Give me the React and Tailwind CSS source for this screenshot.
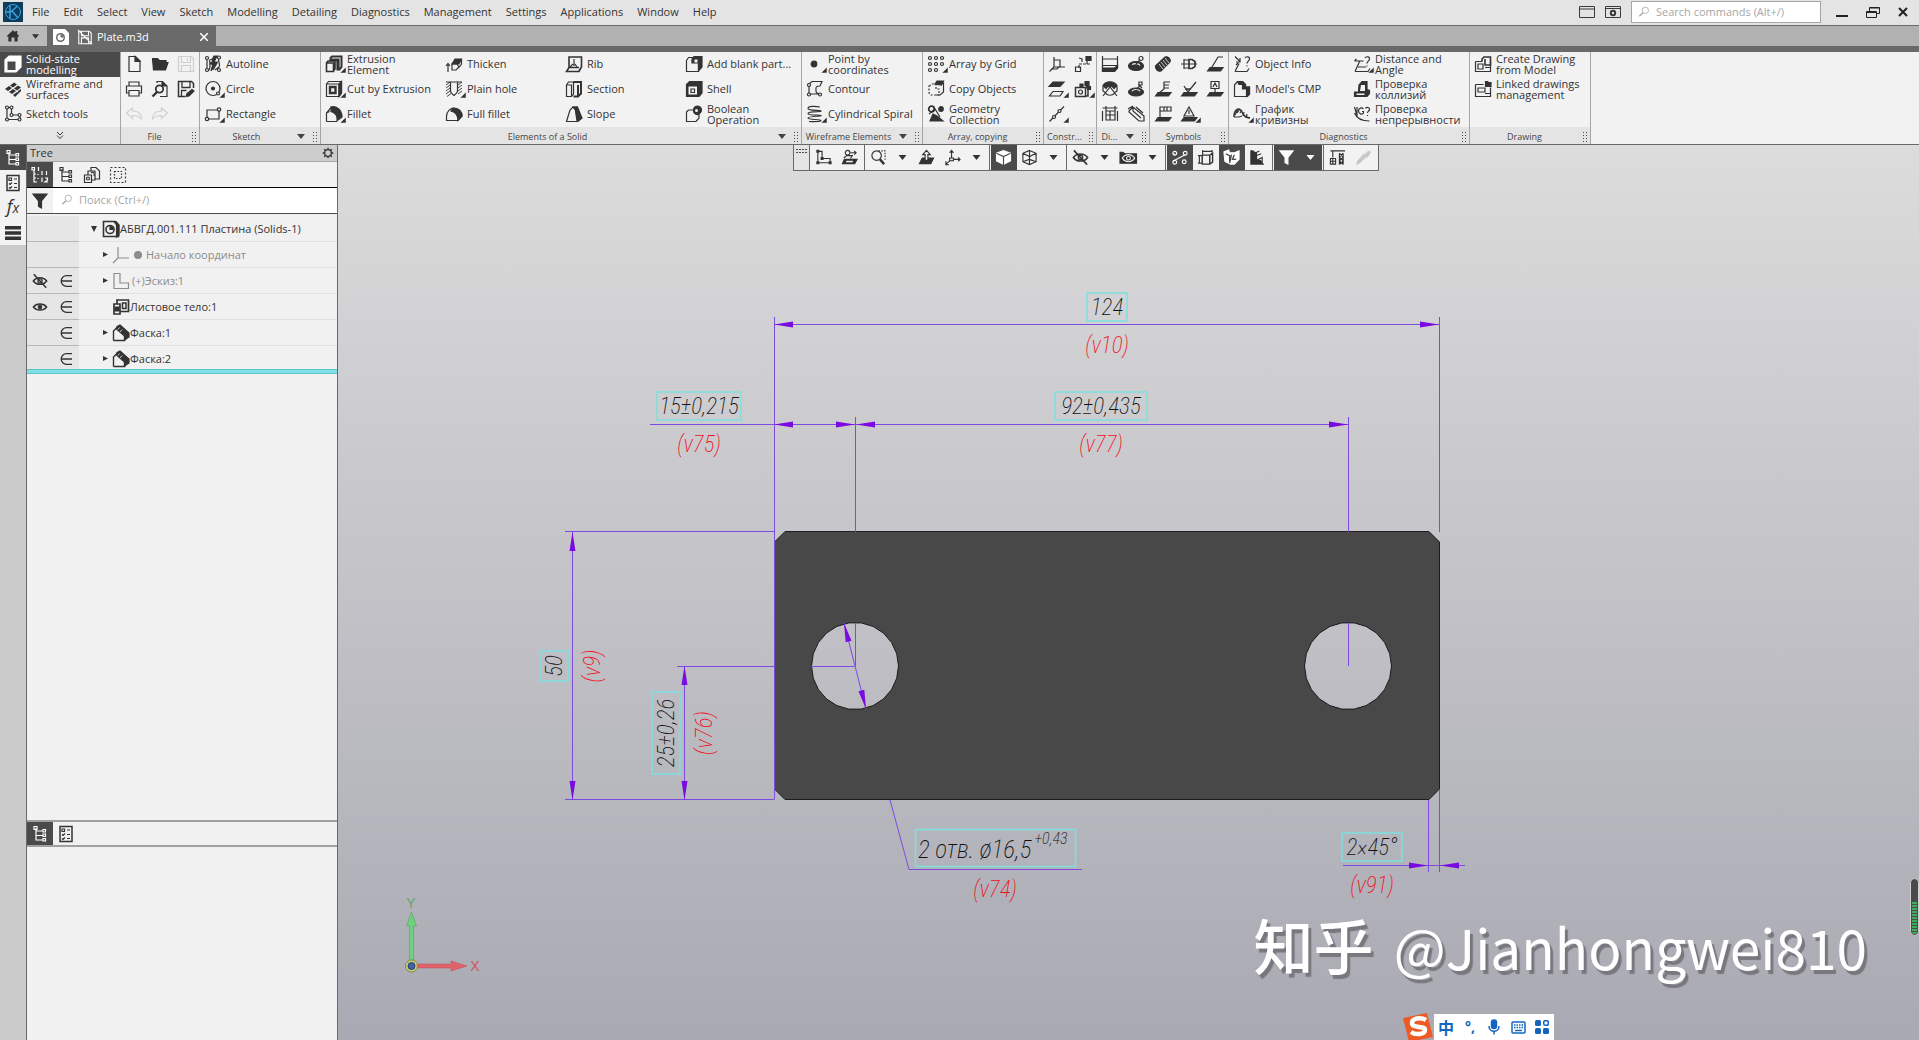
import clsx from 'clsx';

const ICONS = {
    solid: <><path d="M1 5l4-4h12v11l-5 5H1z" fill="currentColor" /><path d="M3.500 6.500h8v8.500h-8z" fill="#4a4a4a" stroke="none" /></>,
    surfaces: <g fill="currentColor" stroke="none"><path d="M1 9l4-3 3 2-4 3zM6 5.500l4-3 3 2-4 3zM5 12l4-3 3 2-4 3zM10 8.500l4-3 3 2-4 3zM9 15l4-3 2 1-4 4zM14 11l3-2v2l-3 3z" /></g>,
    sketchTools: <><path d="M3 2.500h4.500V10H16v4.500H3z" /><g fill="#f2f2f2"><circle cx="3" cy="2.500" r="1.500" /><circle cx="7.500" cy="2.500" r="1.500" /><circle cx="7.500" cy="10" r="1.500" /><circle cx="15.500" cy="10" r="1.500" /><circle cx="15.500" cy="14.500" r="1.500" /><circle cx="3" cy="14.500" r="1.500" /></g></>,
    file: <><path d="M4 1.500h6.500l4.500 4.500v10.500H4z" /><path d="M10 1.500v5h5z" fill="currentColor" /></>,
    open: <path d="M1.500 3.500h5l2 2H15v2h2l-2.500 7.500h-12zM1.500 15" fill="currentColor" />,
    save: <><path d="M1.500 1.500h13l2 2v13h-15z" /><path d="M4.500 1.500v6h9v-6M4.500 16.500v-6h9v6M10.500 3v3" /></>,
    print: <><path d="M4 6V2h10v4M4 13H1.500V6h15v7H14M4 10.500h10V16H4z" /></>,
    preview: <><path d="M6 3V1.500h5.500L16 6v10.500H9" /><path d="M11 1.500V6h5" fill="currentColor" /><circle cx="8.500" cy="9" r="3.700" strokeWidth="1.800" /><path d="M6 12l-4.500 4.500" strokeWidth="2.400" /></>,
    saveAs: <><path d="M16.500 8V3.500l-2-2h-13v15H8" strokeWidth="1.500" /><path d="M5 1.500v6h8v-6M4.500 16.500v-6h5" strokeWidth="1.300" /><path d="M9 16.500l1-3 5-4 2 1.500-5 5z" fill="currentColor" /></>,
    undo: <path d="M1.500 8l6-5v3c6 0 9 3 9 8-2-3-5-3.500-9-3.500v3z" />,
    redo: <path d="M16.500 8l-6-5v3c-6 0-9 3-9 8 2-3 5-3.500 9-3.500v3z" />,
    autoline: <><path d="M3 15V4M3 15c3 1 3-3 3-6s2-6 5-6M11 3L8 9l5-1-4 7M15 3c-2 3 2 5 0 9l-4 3" /><path d="M10 1l3 0-3 6h3l-6 9 2-7H6z" fill="currentColor" /><g fill="#f2f2f2"><circle cx="3" cy="3" r="1.500" /><circle cx="3" cy="15" r="1.500" /><circle cx="15" cy="2.500" r="1.500" /><circle cx="15" cy="15" r="1.500" /><circle cx="7" cy="6" r="1.500" /></g></>,
    circle: <><circle cx="9" cy="8.500" r="7" /><circle cx="9" cy="8.500" r="1.500" fill="currentColor" /><circle cx="14" cy="13.500" r="1.500" fill="#f2f2f2" /></>,
    rectangle: <><path d="M3 5h12v9H3z" /><circle cx="15" cy="4.500" r="1.700" fill="#f2f2f2" /><circle cx="3" cy="14" r="1.700" fill="#f2f2f2" /></>,
    extrusion: <><path d="M5 3.500L7 1.500h9.500V12L14 15" strokeWidth="2" /><path d="M5 4h9v11h-2V6H5z" fill="currentColor" /><path d="M1.500 8h7v8.500h-7zM1.500 8L3 6h7v8l-1.500 2" strokeWidth="1.600" /></>,
    cut: <><path d="M1.500 4l2-2.500h13V13L14 16.500H1.500z" /><path d="M14 4l2.500-2.500V13L14 16.500z" fill="currentColor" /><path d="M1.500 4H14v12.500" /><path d="M5 7h5.500v6H5z" strokeWidth="2.400" /></>,
    fillet: <><path d="M1.500 16.500V8l5-6M12 16.500V13c0-3-3-6-6.500-6.500M1.500 8l3-1.500M12 16.500H1.500" /><path d="M6 2c6-2 11 4 11 10l-4 3c0-5-3-8-7-9z" fill="currentColor" /></>,
    thicken: <><path d="M3 17V9M1 11l2-2.500L5 11" /><path d="M7 9l3-5h6.500L14 9z" fill="currentColor" /><path d="M7 9h5l2 3-3 3H7zM16.500 4v5l-3 4" /></>,
    hole: <><path d="M1 2h16M5.500 2v9c0 2 1.500 3 3.500 4.500 2-1.500 3.500-2.500 3.500-4.500V2" /><path d="M1 5l4-3M1 8l4-3M1 11l4-3M1 14l4-3M2 16.500l4-3M13 5l4-3M13 8l4-3M13 11l4-3M13 14l4-3" strokeWidth="0.900" /></>,
    fullFillet: <><path d="M1.500 15.500v-4C1.500 6 6 3 9 3c5 0 8 4 8 8l-4 4.500z" /><path d="M8 3c5 0 9 4 9 8l-4 4.500c0-5-2-8-7-9.500z" fill="currentColor" /><path d="M4 7.500c4-1 7 1 7 6H3.500z" fill="#f2f2f2" stroke="none" /></>,
    rib: <><path d="M4 12.500V2h12.500v10L14 16.500H1.500L4 12.500h10M16.500 12L14 16" strokeWidth="1.600" /><path d="M9 4v7M5 12l3-3M12 12l-2-3" /></>,
    section: <><path d="M1.500 5l2-3h5v12l-2 2.500h-5zM1.500 5h5v11" /><path d="M8.500 2h7.500v11.500L13 16.500H8.500M13 5v11" strokeWidth="2" /></>,
    slope: <><path d="M1.500 16.500L5 5l3-3h4l-1.500 3L12 16.500z" /><path d="M8 2h4.500L17 13l-4 3.500L10.500 5z" fill="currentColor" /></>,
    blank: <><path d="M1.500 5.500l2-3h4v5h6v9h-12z" /><path d="M7 4L9 1.500h8V12l-3.500 4V8H7z" fill="currentColor" /><path d="M9.500 4.500h3v3h-3z" fill="#f2f2f2" stroke="none" /></>,
    shell: <><path d="M1.500 4.500l3-3h12.500V13L14 16.500H1.500z" fill="currentColor" /><path d="M3.500 6.500h8.500v8H3.500z" fill="#f2f2f2" stroke="none" /><path d="M6 9h3.500v3.500H6z" /></>,
    boolean: <><path d="M1.500 7l2-2h5c0 4 3 5 5.500 4.500V13l-3 3.500h-9.500z" /><circle cx="12.500" cy="5" r="4" fill="currentColor" /><circle cx="11.500" cy="5.500" r="1.500" fill="#f2f2f2" stroke="none" /></>,
    point: <circle cx="8" cy="9" r="2.800" fill="currentColor" />,
    contour: <><path d="M3 4l3-2.500h10L14 6c-5 0-4 2-4 5s3 3 5 3H3V6" /><g fill="#f2f2f2"><circle cx="3" cy="5" r="1.500" /><circle cx="3" cy="14.500" r="1.500" /><circle cx="14" cy="14.500" r="1.500" /></g></>,
    spiral: <path d="M14 2C9 1 2 1 2 3.500S14 5 15 6 2 6 2 8.500 14 9.500 15 10.500 2 11 2 13s13 1 13 2.500-8 1-12 1" />,
    grid: <g>{[3, 9, 15].map((x) => [3, 9, 15].map((y) => (x + y < 30 ? <circle key={x + '-' + y} cx={x} cy={y} r="1.500" /> : null)))}</g>,
    copy: <><path d="M9 4c5 0 5 0 7.500-1v9L13 15H9" /><path d="M2 6l3-2h4v5h3v6H4l-2-2z" strokeDasharray="2 1.500" /><path d="M8 4l2-3h6.500l-2 4z" fill="currentColor" /></>,
    collection: <><circle cx="4.500" cy="4" r="2.800" strokeWidth="1.800" /><circle cx="14" cy="4" r="2.300" fill="currentColor" /><path d="M3 16l3-7 4 2 6 5z" fill="currentColor" /><path d="M2 9l6-5 5 8" /></>,
    lcs: <><path d="M6 2v10h11M6 12l-4.500 4.500M6 5h6v7M3 14h6l3-3" /></>,
    chain: <><path d="M5 13V9h8V3M13 9h4" strokeDasharray="3 1" /><path d="M1.500 12h5v4.500h-5zM5 3l3 1v3" /><path d="M12 1.500h5v4h-5z" fill="currentColor" /></>,
    plane: <><path d="M5 2h11l-4 4.500H1z" fill="currentColor" /><path d="M5 11.500h10l-3 4.500H1.500z" /></>,
    robot: <><path d="M1.500 7.500h10v9h-10zM14 9v7h-3" strokeWidth="1.500" /><circle cx="6.500" cy="12" r="2" /><path d="M6 4h3v3H6zM11 1.500h4v4h-4zM12.500 6.500h4v3h-3z" fill="currentColor" /></>,
    axis: <><path d="M1.500 16.500L16 1.500" /><circle cx="6" cy="12" r="1.500" fill="#f2f2f2" /><circle cx="11.500" cy="6" r="1.500" fill="#f2f2f2" /></>,
    dimLinear: <><path d="M1.500 1v11M16.500 1v11M1.500 4h15" /><path d="M1.500 10.500h15V13l-3 3.500h-12z" /><path d="M1.500 13h12l3-2.500V13l-3 3.500h-12z" fill="currentColor" /></>,
    dimDiameter: <><ellipse cx="9" cy="11" rx="7.500" ry="4.500" fill="currentColor" /><path d="M5 9.500c3-1.500 7-1 8 1" stroke="#f2f2f2" /><path d="M9 9l6-6" /><circle cx="14" cy="3.500" r="2" fill="#f2f2f2" /></>,
    dimAngle: <><path d="M2 5.500c3-5 11-5 14 0l-3 3c-2-3-6-3-8 0z" fill="currentColor" /><path d="M2 16l7-9 7 9M4 13c3 3 7 3 10 0M2 6v5l3 2M16 6v5l-3 2" /></>,
    dimRadius: <><ellipse cx="9" cy="12" rx="7.500" ry="4" fill="currentColor" /><path d="M5 11c2-2 6-2 8 0" stroke="#f2f2f2" /><path d="M9 9l3-2V2h3v3h-3l3 3" /></>,
    dimAuto: <><path d="M5 6h9v9H5zM1.500 3h15M5 1v5M14 1v5M1.500 6v10M16.500 6v10M5 10h9M9 6v9" /></>,
    dimSlant: <path d="M2 6l4-4 11 9v5h-5L2 7zM6 2v4l8 7M1 4l5-3M9 2l7 6" />,
    thread: <><path d="M1.500 11L11 2c3-1 6 2 5 5l-9 9c-3 1-6-2-5.500-5z" fill="currentColor" /><path d="M5 9l4 5M7 7l4 5M9 5l4 5M11 3l4 5" stroke="#f2f2f2" strokeWidth="0.800" /></>,
    centerMark: <><path d="M1 9h16M4 4v10M4 5h6M4 13h6" /><path d="M9 4.500h3l3 2v5l-3 2H9z" strokeWidth="1.700" /></>,
    leader: <><path d="M6 12l6-10h5" /><path d="M1.500 16l2.500-3.500h13l-2.500 3.500z" fill="currentColor" /></>,
    brand: <><path d="M5 13L10 9V2h6M10 5h5M10 8h5" /><path d="M1.500 16l2.500-3.500h13l-2.500 3.500z" fill="currentColor" /></>,
    roughness: <><path d="M4 6l4 6 8-10M5 9h5" strokeWidth="1.300" /><path d="M1.500 16l2.500-3.500h13l-2.500 3.500z" fill="currentColor" /></>,
    base: <><path d="M5 1.500h8v7H5zM9 8.500V12M7 7l2-4 2 4" /><path d="M1.500 16l2.500-3.500h13l-2.500 3.500z" fill="currentColor" /></>,
    tolerance: <><path d="M6 12V2h11v4H6M10 2v4M13 2v4" /><path d="M1.500 16l2.500-3.500h13l-2.500 3.500z" fill="currentColor" /></>,
    warning: <><path d="M9 2l5 9H4zM9 5v4" /><path d="M1.500 16l2.500-3.500h13l-2.500 3.500z" fill="currentColor" /></>,
    info: <><path d="M2 1.500l5 5M7 3v4H3M3 10l2-2M2 16.500l4-8M2 16.500h12l2-3" /><path d="M12 3c1-2 5-1.500 4.500 1S14 6.500 14 8.500M14 10.500v1" /></>,
    mass: <><path d="M1.500 5l3-3.500h5l3 3v2.500h4v7l-2 2.500h-13z" /><path d="M6 4.500l-1.500-3h5l3 3v2.500h4v7l-3 2.500V9H9.500V4.500z" fill="currentColor" /></>,
    graph: <><path d="M1 12c0-7 5-11 8-5s4 5 8 6" strokeWidth="1.600" /><path d="M2 10l3-6M4 8l3-4M7 8l2-3M10 11l1-4M13 13l1-4M1 12h5l3-1" /></>,
    distance: <><path d="M1.500 6h9M1.500 6l2-2M2 16.500l5-11M2 16.500h13l2-3M5 12h8" /><path d="M12 3c1-2 5-1.500 4.500 1S14 6.500 14 8.500M14 10.500v1" /></>,
    collision: <><path d="M1.500 12h4L6 5l3-3.500h5v8l2.500 1v3L14 16.500H1.500z" fill="currentColor" /><path d="M3.500 13.500h8v1.500h-8zM8 5h4v6H7z" fill="#f2f2f2" stroke="none" /></>,
    continuity: <><path d="M1.500 2l2 7M1.500 8c2 5 7 8 15 8M4 2v9" /><path d="M10.500 4C9 2 5.500 3 5.500 6s4 4 5 2V6.500H9M12.500 3.500c1-2 4.500-1 4 1S14.500 6.500 14.500 8M14.500 10v1" /></>,
    createDrawing: <><path d="M1.500 6.500h7M1.500 6.500v10h15v-10M4 9h5v5H4zM11 12.500h5.500" /><path d="M8 6V4l2-2h6.500v8H11V4" strokeWidth="1.600" /></>,
    linked: <><path d="M1.500 4.500h8M1.500 4.500v12h15v-9M4 8h7v4H4zM11 13.500h5.500" /><path d="M11.500 1.500h2l1 1H17v4h-5.500z" fill="currentColor" /></>,
    sketchOn: <path d="M3 2.500h4.500V10H16v4.500H3zM2 1.500h2v2H2zM6.500 9h2v2h-2zM15 13.500h2v2h-2zM2 13.500h2v2H2z" />,
    placeOn: <><circle cx="7" cy="4" r="2.500" /><path d="M10 4h6M14 2l2 2-2 2M3 9.500l3-2.500h6l-2 3" /><path d="M1.500 15.500l2-4.500h13.500l-2.500 4.500z" fill="currentColor" /><path d="M5.500 13.300h7" stroke="#f2f2f2" strokeWidth="1.600" /></>,
    zoomArea: <><circle cx="7" cy="7" r="5" /><path d="M10.500 11l4.500 5" strokeWidth="2.500" /><path d="M9 2h7v10" strokeDasharray="1.500 1.500" /></>,
    orient: <><path d="M1.500 15.500l3-6h12l-3 6z" fill="currentColor" /><path d="M7.500 12V6H5l4-4.500L13 6h-2.500v6z" fill="#f2f2f2" /></>,
    axes: <><path d="M8 12V2M6 4l2-2.500L10 4M8 11h9M15 9l2 2-2 2M8 11l-6 5M2 13v3.500h3" /><path d="M6 9.500h4v3H6z" fill="#f2f2f2" /></>,
    cube: <><path d="M9 1l8 3v9l-8 4-8-4V4z" fill="currentColor" stroke="none" /><path d="M1.500 4.500L9 8l7.500-3.500M9 8v9" stroke="#4a4a4a" /></>,
    wireCube: <><path d="M9 1.500l7 3v9l-7 3-7-3v-9zM2 4.500L9 8l7-3.500M9 8v8.500M9 1.500V11l-7 2.500M9 11l7 2.500" /></>,
    eyeOff: <><path d="M1.500 9C5 4 13 4 16.500 9 13 14 5 14 1.500 9zM2 1.500l14 15" strokeWidth="1.700" /><circle cx="9" cy="9" r="2.300" strokeWidth="1.500" /></>,
    eye: <><path d="M1.500 9C5 4.500 13 4.500 16.500 9 13 13.500 5 13.500 1.500 9z" strokeWidth="1.500" /><circle cx="9" cy="9" r="2" fill="currentColor" /></>,
    eyeBox: <><path d="M0 3.500h3l2 1.500h12.500v10H0z" fill="currentColor" /><path d="M2.500 9.700c3-5 10-5 13 0-3 5-10 5-13 0z" stroke="#f2f2f2" /><circle cx="9" cy="9.700" r="2" stroke="#f2f2f2" /></>,
    constraints: <><path d="M2 13L15 6M3 5l1 1" /><circle cx="4" cy="4.500" r="2" /><circle cx="4" cy="14" r="2" /><circle cx="15" cy="4.500" r="2" /><circle cx="14" cy="13.500" r="2" /></>,
    dims: <><path d="M5.500 6.500h8v9.500h-8zM13.500 6.500l3-2v9.500l-3 2" strokeWidth="1.500" /><path d="M6 1v5M16 1v3M6 2.500h10M1 7h4M1 15h4M2.500 6.500v9" /></>,
    layers: <><path d="M1 3l5-2 1 3h5l5-2v9l-5 5H8l-6-3z" fill="currentColor" /><path d="M3 5l4 2v6M9 6l-2 9M12 6l-2 5h4" stroke="#4a4a4a" strokeWidth="1.400" /></>,
    sheet: <><path d="M2 2v14h13l-3-4H8V5L4 2z" fill="currentColor" /><path d="M5 5l6-3M5 8l8-3M8 12l6-3v5" /></>,
    filter: <path d="M2 2h14l-5.500 7v7l-3-1.500V9z" fill="currentColor" />,
    crane: <><path d="M1.500 2h15.500M11 4.500v12M15 4.500v12M11 4.500l4 4-4 4 4 4M15 4.500l-4 4 4 4-4 4M4 2v7M1.500 10h5.500v6H1.500zM1.500 13H7M4 10v6" /></>,
    dropper: <path d="M2 16l1-3.500 6-6 2 2-6 6zM9 5l4 4M11 6l2.500-3c2-1.500 3.500 0 2 2L13 8z" fill="currentColor" />,
    tree: <><path d="M5 3v12h7M5 6h7M5 10.500h7" /><path d="M3 1.500h3v3H3zM12 4.500h2.500v2.500H12zM12 9h2.500v2.500H12zM12 13.500h2.500V16H12z" /></>,
    props: <><path d="M3 1.500h12v15H3z" strokeWidth="1.500" /><path d="M5 4h2.500v2.500H5zM5 9.500l1 1 2-2M5 13.500l1 1 2-2M10 5h3M10 9.500h3M10 13.500h3" /></>,
    bars: <path d="M0 3h18M0 9h18M0 15h18" strokeWidth="4" />,
    treeNumbers: <><path d="M3 4v12h3M3 8h2M3 12h2M1 1.500h2.500v2.500H1z" /><path d="M7.500 1v4M11 5v4M15.500 5v4M7 8v1M7 12v1M11 11.500V16M14 12h2.500v2L14 16h3" /></>,
    copies: <><path d="M1.500 9h7v7.500h-7zM5 9V5h7v9H8.500M8 5V1.500h5L16.500 5v8H12" /><circle cx="5" cy="12.500" r="1.500" /><path d="M8 7c2-2 4 0 3 3" /></>,
    dotted: <><path d="M1.500 1.500h15v15h-15z" strokeDasharray="2 2" /><path d="M5.500 5.500h7v7h-7z" strokeDasharray="1.500 1.500" /></>,
    part: <><path d="M1.500 5V1.500H13L16.500 5v11.500h-15z" strokeWidth="1.600" /><path d="M12 1.500h2L17 5v10l-2.500 2V5z" fill="currentColor" /><circle cx="8" cy="9.500" r="4" strokeWidth="1.600" /><path d="M8 9.500V6.500a3 3 0 013 3z" fill="currentColor" /></>,
    coord: <path d="M6 1v11h11M6 12l-5 5" />,
    sketch: <path d="M2 1.500h6V11h8.500v5.500H2z" />,
    sheetBody: <><path d="M2 6h6v10H2zM5 6V2h11.500v11.500H8" strokeWidth="1.700" /><path d="M10.500 5h3.500v5.500h-3.500z" strokeWidth="1.500" /><path d="M3 9h4v4H3z" fill="currentColor" /></>,
    chamfer: <><path d="M1.500 16.500V7L5 3.500M12.500 12v4.500h-11M12.500 16.500L16 13" strokeWidth="1.400" /><path d="M5 2.500L8 1l9 8v4l-3.500 1.500-1-2.500L4.500 5z" fill="currentColor" /><path d="M7.500 3.500l-1.500 2M10 5.500L8 8" stroke="#f2f2f2" strokeWidth="0.800" /></>,
    search: <><circle cx="11" cy="6.500" r="4.800" /><path d="M7.500 10L2 15.500" strokeWidth="2" /></>,
    gear: <><circle cx="9" cy="9" r="5" strokeWidth="2" /><path d="M9 1v3M9 14v3M1 9h3M14 9h3M3.300 3.300l2 2M12.700 12.700l2 2M3.300 14.700l2-2M12.700 5.300l2-2" strokeWidth="2" /></>,
    home: <path d="M1 9l8-7.500 3 2.700V2.500h2.500V6.500L17 9v.5h-2V16h-4v-5H7v5H3V9.500H1z" fill="currentColor" stroke="none" />,
    diskOff: <><path d="M2 2.500h12l2 2v12H2zM5 2.500v5h8v-5M5 16v-6h8v6M1 1l16 16" /></>,
};

function Icon({ name, corner, className = 'h-[18px] w-[18px]' }) {
    return (
        <svg viewBox="0 0 18 18" aria-hidden="true" fill="none" stroke="currentColor" strokeWidth="1.200" className={clsx('shrink-0 overflow-visible', className)}>
            {ICONS[name]}
            {corner && <path d="M21 12v6h-6z" fill="currentColor" stroke="#f2f2f2" strokeWidth="0.500" />}
        </svg>
    );
}

function Caret({ className }) {
    return (
        <svg viewBox="0 0 8 5" aria-hidden="true" className={clsx('h-[5px] w-2 shrink-0', className)}>
            <path d="M0 0h8L4 5z" fill="currentColor" />
        </svg>
    );
}

function Grip() {
    return (
        <svg viewBox="0 0 5 10" aria-hidden="true" className="h-2.5 w-[5px] shrink-0">
            {[0, 3, 6, 9].map((y) => (
                <g key={y} fill="#4a4a4a">
                    <rect x="0" y={y} width="1" height="1" />
                    <rect x="3" y={y} width="1" height="1" />
                </g>
            ))}
        </svg>
    );
}

const MENU = ['File', 'Edit', 'Select', 'View', 'Sketch', 'Modelling', 'Detailing', 'Diagnostics', 'Management', 'Settings', 'Applications', 'Window', 'Help'];

// [icon, label, hasCorner], three items per column, "|" marks the line break
const GROUPS = [
    {
        title: 'Sketch', width: 'w-[121px]', caret: true,
        columns: [[['autoline', 'Autoline'], ['circle', 'Circle', true], ['rectangle', 'Rectangle', true]]],
    },
    {
        title: 'Elements of a Solid', width: 'w-[481px]', caret: true,
        columns: [
            [['extrusion', 'Extrusion|Element', true], ['cut', 'Cut by Extrusion', true], ['fillet', 'Fillet', true]],
            [['thicken', 'Thicken'], ['hole', 'Plain hole', true], ['fullFillet', 'Full fillet']],
            [['rib', 'Rib'], ['section', 'Section'], ['slope', 'Slope']],
            [['blank', 'Add blank part...'], ['shell', 'Shell'], ['boolean', 'Boolean|Operation']],
        ],
    },
    {
        title: 'Wireframe Elements', width: 'w-[121px]', caret: true,
        columns: [[['point', 'Point by|coordinates', true], ['contour', 'Contour'], ['spiral', 'Cylindrical Spiral', true]]],
    },
    {
        title: 'Array, copying', width: 'w-[121px]',
        columns: [[['grid', 'Array by Grid', true], ['copy', 'Copy Objects'], ['collection', 'Geometry|Collection']]],
    },
    {
        title: 'Constr...', width: 'w-[53px]',
        icons: [['lcs', 'Local coordinate system'], ['chain', 'Joint'], ['plane', 'Offset plane', true], ['robot', 'Component', true], ['axis', 'Axis', true]],
    },
    {
        title: 'Di...', width: 'w-[53px]', caret: true,
        icons: [['dimLinear', 'Linear dimension'], ['dimDiameter', 'Diametral dimension'], ['dimAngle', 'Angular dimension'], ['dimRadius', 'Radial dimension'], ['dimAuto', 'Auto dimension'], ['dimSlant', 'Slanted dimension']],
    },
    {
        title: 'Symbols', width: 'w-[79px]',
        icons: [['thread', 'Thread'], ['centerMark', 'Center mark'], ['leader', 'Leader'], ['brand', 'Brand'], ['roughness', 'Roughness'], ['base', 'Base'], ['tolerance', 'Tolerance'], ['warning', 'Mark', true]],
    },
    {
        title: 'Diagnostics', width: 'w-[241px]',
        columns: [
            [['info', 'Object Info'], ['mass', "Model's CMP"], ['graph', 'График|кривизны', true]],
            [['distance', 'Distance and|Angle', true], ['collision', 'Проверка|коллизий'], ['continuity', 'Проверка|непрерывности']],
        ],
    },
    {
        title: 'Drawing', width: 'w-[121px]',
        columns: [[['createDrawing', 'Create Drawing|from Model'], ['linked', 'Linked drawings|management']]],
    },
];

const FILE_ICONS = [['file', 'New'], ['open', 'Open'], ['save', 'Save', false, true], ['print', 'Print'], ['preview', 'Preview'], ['saveAs', 'Save as'], ['undo', 'Undo', false, true], ['redo', 'Redo', false, true]];

function RibbonButton({ icon, label, corner, active }) {
    return (
        <button type="button" className={clsx('flex h-[25px] w-[120px] items-center gap-1 pb-0.5 pl-1 text-left leading-[11px] whitespace-nowrap', active ? 'bg-[#4a4a4a] text-white' : 'hover:bg-[#dcdcdc]')}>
            <Icon name={icon} corner={corner} />
            <span className="flex flex-col">
                {label.split('|').map((line) => <span key={line}>{line}</span>)}
            </span>
        </button>
    );
}

function IconGrid({ icons }) {
    return (
        <div className="flex flex-wrap content-start">
            {icons.map(([icon, label, corner, disabled]) => (
                <button key={icon} type="button" aria-label={label} disabled={disabled} className="flex h-[25px] w-[26px] items-center justify-center pb-0.5 hover:bg-[#dcdcdc] disabled:text-[#cfcfcf]">
                    <Icon name={icon} corner={corner} />
                </button>
            ))}
        </div>
    );
}

function Group({ title, width, caret, columns, icons }) {
    return (
        <section className={clsx('flex shrink-0 flex-col border-r border-[#a6a6a6]', width)}>
            <div className="flex h-[75px]">
                {icons ? <IconGrid icons={icons} /> : columns.map((column) => (
                    <div key={column[0][0]} className="w-[120px]">
                        {column.map(([icon, label, corner]) => <RibbonButton key={icon} icon={icon} label={label} corner={corner} />)}
                    </div>
                ))}
            </div>
            <div className="flex h-[17px] items-center gap-1 bg-[#e4e4e4] pt-0.5 pr-0.5 text-[9px] leading-4 text-[#444]">
                <span className="min-w-0 flex-1 text-center whitespace-nowrap">{title}</span>
                {caret && <Caret className="mr-1" />}
                <Grip />
            </div>
        </section>
    );
}

function TitleBar() {
    return (
        <header className="flex h-[26px] shrink-0 items-center border-b border-[#696969] bg-[#e4e4e4] pb-px">
            <svg viewBox="0 0 20 20" className="ml-[3px] h-5 w-5" aria-hidden="true">
                <rect width="20" height="20" fill="#0d3c5c" />
                <circle cx="10" cy="10" r="7.500" fill="none" stroke="#3aa5dc" />
                <path d="M7 3.500v13M7 10.500l7-6M9 9l6 7M3 10h4" fill="none" stroke="#3aa5dc" strokeWidth="1.500" />
            </svg>
            <nav className="ml-0.5 flex flex-1">
                {MENU.map((item) => (
                    <button key={item} type="button" className="px-[7px] hover:bg-[#d0d0d0]">{item}</button>
                ))}
            </nav>
            <button type="button" aria-label="Layout" className="mr-2.5">
                <svg viewBox="0 0 16 12" className="h-3 w-4" fill="none" stroke="#3a3a3a"><path d="M.5.5h15v11H.5zM.5 3h15" /></svg>
            </button>
            <button type="button" aria-label="Interface settings" className="mr-2.5">
                <svg viewBox="0 0 16 12" className="h-3 w-4" fill="none" stroke="#3a3a3a"><path d="M.5.5h15v11H.5zM.5 2.500h15" /><circle cx="8" cy="7" r="2.200" strokeWidth="2" /></svg>
            </button>
            <label className="flex h-[22px] w-[190px] items-center gap-1.5 border border-[#a6a6a6] bg-white pl-1.5 text-[#a6a6a6]">
                <Icon name="search" className="h-3 w-3" />
                <input aria-label="Search commands" placeholder="Search commands (Alt+/)" className="w-full bg-transparent outline-none placeholder:text-[#a6a6a6]" />
            </label>
            <div className="mr-[11px] ml-[15px] flex items-center gap-[18px]">
                <button type="button" aria-label="Minimize"><svg viewBox="0 0 12 12" className="h-3 w-3" stroke="#222" strokeWidth="2"><path d="M0 10h12" /></svg></button>
                <button type="button" aria-label="Restore"><svg viewBox="0 0 14 12" className="h-3 w-3.5" fill="none" stroke="#222"><path d="M.5 5.500h10v6H.5zM.5 6.500h10M3.500 5V1.500h10v6H11M3.500 2h10" /></svg></button>
                <button type="button" aria-label="Close"><svg viewBox="0 0 10 10" className="h-2.5 w-2.5" stroke="#222" strokeWidth="2"><path d="M1 1l8 8M9 1L1 9" /></svg></button>
            </div>
        </header>
    );
}

function TabBar() {
    return (
        <div className="flex h-[26px] shrink-0 border-b-[6px] border-[#696969] bg-[#b1b1b1]">
            <button type="button" aria-label="Home" className="flex w-[47px] items-center gap-3 bg-[#bababa] pl-1.5">
                <Icon name="home" className="h-3.5 w-3.5" />
                <Caret className="h-1 w-[7px]" />
            </button>
            <div className="flex w-[169px] items-center bg-[#696969] pt-0.5 pl-[5px] text-white">
                <svg viewBox="0 0 18 18" className="h-[18px] w-[18px]" aria-hidden="true">
                    <path d="M1 1h12l4 4v12H1z" fill="#fff" />
                    <circle cx="8.500" cy="9.500" r="4.500" fill="#696969" />
                    <circle cx="8.500" cy="9.500" r="3" fill="#fff" />
                    <path d="M8.500 9.500v-3a3 3 0 013 3z" fill="#696969" />
                </svg>
                <Icon name="diskOff" className="ml-[7px] h-4 w-4" />
                <span className="ml-1 flex-1">Plate.m3d</span>
                <button type="button" aria-label="Close tab" className="mr-2">
                    <svg viewBox="0 0 8 8" className="h-2 w-2" stroke="currentColor" strokeWidth="1.500"><path d="M0 0l8 8M8 0L0 8" /></svg>
                </button>
            </div>
        </div>
    );
}

function Ribbon() {
    return (
        <div className="flex h-[93px] shrink-0 border-b border-[#696969] bg-[#f2f2f2]">
            <section className="flex w-[121px] shrink-0 flex-col border-r border-[#a6a6a6]">
                <RibbonButton icon="solid" label="Solid-state|modelling" active />
                <RibbonButton icon="surfaces" label="Wireframe and|surfaces" />
                <RibbonButton icon="sketchTools" label="Sketch tools" />
                <button type="button" aria-label="More toolsets" className="flex h-[17px] items-center justify-center bg-[#e4e4e4]">
                    <svg viewBox="0 0 8 7" className="h-[7px] w-2" fill="none" stroke="currentColor"><path d="M1 0l3 3 3-3M1 3.500l3 3 3-3" /></svg>
                </button>
            </section>
            <Group title="File" width="w-[79px]" icons={FILE_ICONS} />
            {GROUPS.map((group) => <Group key={group.title} {...group} />)}
        </div>
    );
}

const NODES = [
    { icon: 'part', label: 'АБВГД.001.111 Пластина (Solids-1)', open: true },
    { icon: 'coord', label: 'Начало координат', muted: true, dot: true, arrow: true },
    { icon: 'sketch', label: 'Эскиз:1', muted: true, plus: true, arrow: true, eye: 'eyeOff', member: true },
    { icon: 'sheetBody', label: 'Листовое тело:1', eye: 'eye', member: true },
    { icon: 'chamfer', label: 'Фаска:1', arrow: true, member: true },
    { icon: 'chamfer', label: 'Фаска:2', arrow: true, member: true },
];

function TreeRow({ icon, label, open, muted, dot, plus, arrow, eye, member }) {
    return (
        <li className="flex h-[26px]">
            <div className="flex w-[52px] border-b border-[#b8b8b8] bg-[#e6e6e6]">
                <span className="flex w-[26px] items-center justify-center">{eye && <Icon name={eye} className="h-4 w-4" />}</span>
                <span className="flex w-[26px] items-center justify-center">
                    {member && <svg viewBox="0 0 12 12" className="h-3 w-3" fill="none" stroke="currentColor" strokeWidth="1.300"><path d="M12 .7H6.500a5.300 5.300 0 000 10.600H12M1 6h11" /></svg>}
                </span>
            </div>
            <div className={clsx('flex flex-1 items-center border-b border-[#e0e0e0] whitespace-nowrap', open ? 'pl-3' : 'pl-[22px]')}>
                <span className="flex w-[11px] shrink-0 justify-start">
                    {open && <svg viewBox="0 0 6 6" className="h-1.5 w-1.5"><path d="M0 0h6L3 6z" fill="currentColor" /></svg>}
                    {arrow && <svg viewBox="0 0 6 6" className="ml-0.5 h-[5px] w-[5px]"><path d="M0 0l6 3-6 3z" fill="currentColor" /></svg>}
                </span>
                <span className={clsx('flex items-center', muted && 'text-[#8c8c8c]')}>
                    <Icon name={icon} />
                    {dot && <span className="mr-1 ml-1 h-2 w-2 rounded-full bg-[#8c8c8c]" />}
                    {plus && <span className="ml-0.5">(+)</span>}
                    <span>{label}</span>
                </span>
            </div>
        </li>
    );
}

function SideRail() {
    return (
        <div className="w-[27px] shrink-0 border-r border-[#696969] bg-[#cbcbcb]">
            <div className="flex flex-col bg-[#f2f2f2]">
                <button type="button" aria-label="Tree" className="flex h-[25px] items-center justify-center bg-[#4a4a4a] text-white"><Icon name="tree" /></button>
                <button type="button" aria-label="Parameters" className="flex h-[26px] items-center justify-center"><Icon name="props" /></button>
                <button type="button" className="flex h-[26px] items-baseline justify-center text-lg leading-5 italic"><i>f</i><span className="text-sm leading-5">x</span></button>
                <button type="button" aria-label="Panels" className="flex h-[23px] items-center justify-center pb-0.5"><Icon name="bars" className="h-4 w-4" /></button>
            </div>
        </div>
    );
}

function TreePanel() {
    return (
        <aside className="flex w-[311px] shrink-0 flex-col border-r border-[#696969] bg-[#f1f1f1]">
            <div className="flex h-[17px] items-center justify-between border-b border-[#a6a6a6] bg-[#cdcdcd] pr-[3px] pl-[3px]">
                <h2>Tree</h2>
                <button type="button" aria-label="Tree settings"><Icon name="gear" className="h-3 w-3" /></button>
            </div>
            <div className="flex h-[26px] border-b border-black">
                {['treeNumbers', 'tree', 'copies', 'dotted'].map((name, i) => (
                    <button key={name} type="button" aria-label={name} className={clsx('flex w-[26px] items-center justify-center', i === 0 && 'bg-[#4a4a4a] text-white')}>
                        <Icon name={name} />
                    </button>
                ))}
            </div>
            <div className="flex h-[26px] border-b border-[#4a4a4a]">
                <button type="button" aria-label="Filter" className="flex w-[26px] items-center justify-center"><Icon name="filter" /></button>
                <label className="flex flex-1 items-center gap-1.5 bg-white pb-0.5 pl-2 text-[#a6a6a6]">
                    <Icon name="search" className="h-3 w-3" />
                    <input aria-label="Поиск" placeholder="Поиск (Ctrl+/)" className="w-full outline-none placeholder:text-[#a6a6a6]" />
                </label>
            </div>
            <ul className="flex-1 pt-0.5">
                {NODES.map((node) => <TreeRow key={node.label} {...node} />)}
                <li className="relative -mt-[3px] h-[5px] border-y border-[#5cc4cb] bg-[#7fe0e6]" />
            </ul>
            <div className="flex h-[27px] border-y-2 border-[#a0a0a0]">
                <button type="button" aria-label="Structure" className="flex w-[26px] items-center justify-center bg-[#4a4a4a] text-white"><Icon name="tree" /></button>
                <button type="button" aria-label="Properties" className="flex w-[26px] items-center justify-center"><Icon name="props" /></button>
            </div>
            <div className="h-[193px]" />
        </aside>
    );
}

function ViewButton({ name, active, caret, muted }) {
    return (
        <button type="button" aria-label={name} className={clsx('flex h-[25px] items-center', active && 'bg-[#4a4a4a] text-white', muted && 'text-[#c8c8c8]')}>
            <span className="flex w-[26px] justify-center"><Icon name={name} className="h-[17px] w-[17px]" /></span>
            {caret && <span className="flex w-[22px] justify-center"><Caret className="w-[9px]" /></span>}
        </button>
    );
}

function ViewToolbar() {
    const box = 'flex border-r border-[#696969] px-px';
    return (
        <div className="flex justify-center pr-[86px]">
            <div className="flex h-[26px] border border-t-0 border-[#696969] bg-[#f2f2f2]">
                <div className="w-4 border-r border-[#696969] bg-[#e4e4e4] pt-1 pl-0.5">
                    <svg viewBox="0 0 12 5" className="h-[5px] w-3" aria-hidden="true"><path d="M0 .5h12M0 3.500h12" stroke="#4a4a4a" strokeDasharray="2 1" /></svg>
                </div>
                <div className={box}><ViewButton name="sketchOn" /><ViewButton name="placeOn" /></div>
                <div className={box}><ViewButton name="zoomArea" caret /><ViewButton name="orient" /><ViewButton name="axes" caret /></div>
                <div className={box}><ViewButton name="cube" active /><ViewButton name="wireCube" caret /></div>
                <div className={box}><ViewButton name="eyeOff" caret /><ViewButton name="eyeBox" caret /></div>
                <div className={box}><ViewButton name="constraints" active /><ViewButton name="dims" /><ViewButton name="layers" active /><ViewButton name="sheet" /></div>
                <div className={box}><ViewButton name="filter" active caret /></div>
                <div className="flex px-px"><ViewButton name="crane" /><ViewButton name="dropper" muted /></div>
            </div>
        </div>
    );
}

// arrowhead with its tip at x, y, turned by angle degrees (0 points right)
function Arrow({ x, y, angle = 0 }) {
    return <path d="M0 0l-19-3v6z" fill="#7a0be0" transform={`translate(${x} ${y}) rotate(${angle})`} />;
}

// dimension value in its frame plus the variable name below the line
function Label({ x, y, w, h = 28, text, name, nameX = x, nameY = y + 34, turned }) {
    return (
        <g transform={turned ? `rotate(-90 ${x} ${y})` : undefined}>
            <rect x={x - w / 2} y={y - h / 2} width={w} height={h} fill="none" stroke="#7fe0e0" strokeWidth="1.500" />
            <text x={x} y={y + 8} textAnchor="middle" fill="#111">{text}</text>
            <text x={nameX} y={nameY + 12} textAnchor="middle" fill="#f0101c">{name}</text>
        </g>
    );
}

function hole(cx, cy, r) {
    const points = [];
    for (let i = 0; i < 22; i++) {
        const a = (i / 22) * Math.PI * 2;
        points.push(`${(cx + r * Math.cos(a)).toFixed(1)} ${(cy + r * Math.sin(a)).toFixed(1)}`);
    }
    return `M${points.join('L')}z`;
}

function Drawing() {
    return (
        <svg viewBox="338 145 1581 895" role="img" aria-label="Plate" className="h-full w-full font-['Roboto_Condensed','Liberation_Sans_Narrow','Open_Sans',sans-serif] text-[23px] font-extralight italic">
            <path d={`M774.500 542L785 531.500H1429L1439.500 542V789L1429 799.500H785L774.500 789z${hole(855, 666, 43.5)}${hole(1348, 666, 43.5)}`} fill="#484848" fillRule="evenodd" stroke="#1c1c1c" />
            <g fill="none" stroke="#7d4be0">
                <path d="M774.500 317V799.500M1439.500 317V532M855.500 417V532M1348.500 417V532" />
                <path d="M774 324.500H1439M650 424.500H1348M565 531.500H774M565 799.500H774M572.500 532V800" />
                <path d="M677 666.500H774M811 666.500H855M684.500 666V800M855.500 623V666M1348.500 623V666" />
                <path d="M844 623L866 709M890 800L909 869.500H1082M1343 865.500H1465M1428.500 800V872M1439.500 790V872" />
            </g>
            <Arrow x={774} y={324.5} angle={180} />
            <Arrow x={1439} y={324.5} />
            <Arrow x={774} y={424.5} angle={180} />
            <Arrow x={855} y={424.5} />
            <Arrow x={856} y={424.5} angle={180} />
            <Arrow x={1348} y={424.5} />
            <Arrow x={572.5} y={532} angle={-90} />
            <Arrow x={572.5} y={800} angle={90} />
            <Arrow x={684.5} y={666} angle={-90} />
            <Arrow x={684.5} y={800} angle={90} />
            <Arrow x={844} y={623} angle={-104} />
            <Arrow x={866} y={709} angle={76} />
            <Arrow x={1428} y={865.5} />
            <Arrow x={1440} y={865.5} angle={180} />
            <Label x={1107} y={307} w={40} text="124" name="(v10)" />
            <Label x={699} y={406} w={84} text="15±0,215" name="(v75)" />
            <Label x={1101} y={406} w={92} text="92±0,435" name="(v77)" />
            <Label x={554} y={666} w={30} text="50" name="(v9)" turned />
            <Label x={666} y={733} w={82} text="25±0,26" name="(v76)" turned />
            <Label x={1372} y={847} w={60} text="2×45°" name="(v91)" nameY={881} />
            <rect x="915.500" y="829.500" width="160" height="37" fill="none" stroke="#7fe0e0" strokeWidth="1.500" />
            <text x="918" y="858" fill="#111" className="text-[25px]">2 отв. ø16,5<tspan dx="3" dy="-14" className="text-base">+0,43</tspan></text>
            <text x="995" y="897" textAnchor="middle" fill="#f0101c">(v74)</text>
            <g className="font-['Liberation_Sans'] text-sm not-italic">
                <path d="M409.500 960V926h-3l5-14 5 14h-3v34z" fill="#6fd07f" stroke="#4f9f5c" strokeWidth="0.500" />
                <path d="M418 964h33v-3l16 5-16 5v-3h-33z" fill="#e0636b" stroke="#c04a52" strokeWidth="0.500" />
                <circle cx="411.500" cy="966" r="6" fill="#c9cf7a" stroke="#7a8f3f" />
                <circle cx="411.500" cy="966" r="3.500" fill="#3f62a8" stroke="#26416f" />
                <text x="411" y="908" textAnchor="middle" fill="#5fa86a">Y</text>
                <text x="475" y="971" textAnchor="middle" fill="#d0555d">X</text>
            </g>
        </svg>
    );
}

function InputMethodBar() {
    return (
        <div className="absolute right-[365px] bottom-0 flex h-[26px] items-center bg-white pl-1 text-[#1565c0]">
            <svg viewBox="0 0 32 30" className="-my-0.5 -ml-9 h-[30px] w-8" aria-hidden="true">
                <path d="M1 6L25 1l6 24-24 5z" fill="#ee5a24" />
                <path d="M24 8c-5-3-14-2-14 3 0 6 13 2 13 7 0 5-10 5-14 2" fill="none" stroke="#fff" strokeWidth="4.500" />
            </svg>
            <button type="button" className="w-6 font-['Noto_Sans_CJK_SC',sans-serif] text-base font-bold">中</button>
            <button type="button" className="w-6 text-sm font-bold">°,</button>
            <button type="button" aria-label="Voice" className="flex w-6 justify-center">
                <svg viewBox="0 0 12 16" className="h-4 w-3" fill="none" stroke="currentColor" strokeWidth="1.500"><rect x="3.500" y="1" width="5" height="8.500" rx="2.500" fill="currentColor" /><path d="M1 7c0 7 10 7 10 0M6 12v3.500" /></svg>
            </button>
            <button type="button" aria-label="Keyboard" className="flex w-6 justify-center">
                <svg viewBox="0 0 15 13" className="h-[13px] w-[15px]" fill="none" stroke="currentColor" strokeWidth="1.500"><rect x="1" y="1" width="13" height="11" rx="1" /><path d="M3 4h9M3 6.500h9" strokeDasharray="1.500 1" /><path d="M4 9.500h7" /></svg>
            </button>
            <button type="button" aria-label="Toolbox" className="flex w-6 justify-center">
                <svg viewBox="0 0 14 14" className="h-3.5 w-3.5" fill="currentColor"><rect width="6" height="6" rx="1.500" /><rect x="8.700" y="0.700" width="4.600" height="4.600" rx="1.500" fill="none" stroke="currentColor" strokeWidth="1.500" /><rect y="8" width="6" height="6" rx="1.500" /><rect x="8" y="8" width="6" height="6" rx="1.500" /></svg>
            </button>
        </div>
    );
}

export default function App() {
    return (
        <div className="flex h-screen flex-col overflow-hidden bg-[#f1f1f1] font-['Open_Sans','Noto_Sans',sans-serif] text-[11px] leading-4 text-[#333]">
            <TitleBar />
            <TabBar />
            <Ribbon />
            <div className="flex min-h-0 flex-1">
                <SideRail />
                <TreePanel />
                <main className="relative min-w-0 flex-1 bg-linear-to-b from-[#dcdcdc] to-[#a9a9b3]">
                    <div className="absolute inset-0"><Drawing /></div>
                    <div className="relative"><ViewToolbar /></div>
                    <p className="absolute right-[52px] bottom-[54px] font-['Noto_Sans_CJK_SC',sans-serif] text-[55px] leading-[80px] whitespace-nowrap text-white [text-shadow:3px_4px_1px_#77777d]"><span className="mr-2 text-[60px] font-medium">知乎</span> @Jianhongwei810</p>
                    <div className="absolute right-0 bottom-[104px] flex h-[58px] w-[9px] flex-col justify-end rounded-full border border-[#d0d0d0] bg-[#4a4a4a] p-px">
                        <div className="h-[33px] rounded-b-full bg-[repeating-linear-gradient(#4a4a4a_0_1px,#3fae5c_1px_3px)]" />
                    </div>
                    <InputMethodBar />
                </main>
            </div>
        </div>
    );
}
